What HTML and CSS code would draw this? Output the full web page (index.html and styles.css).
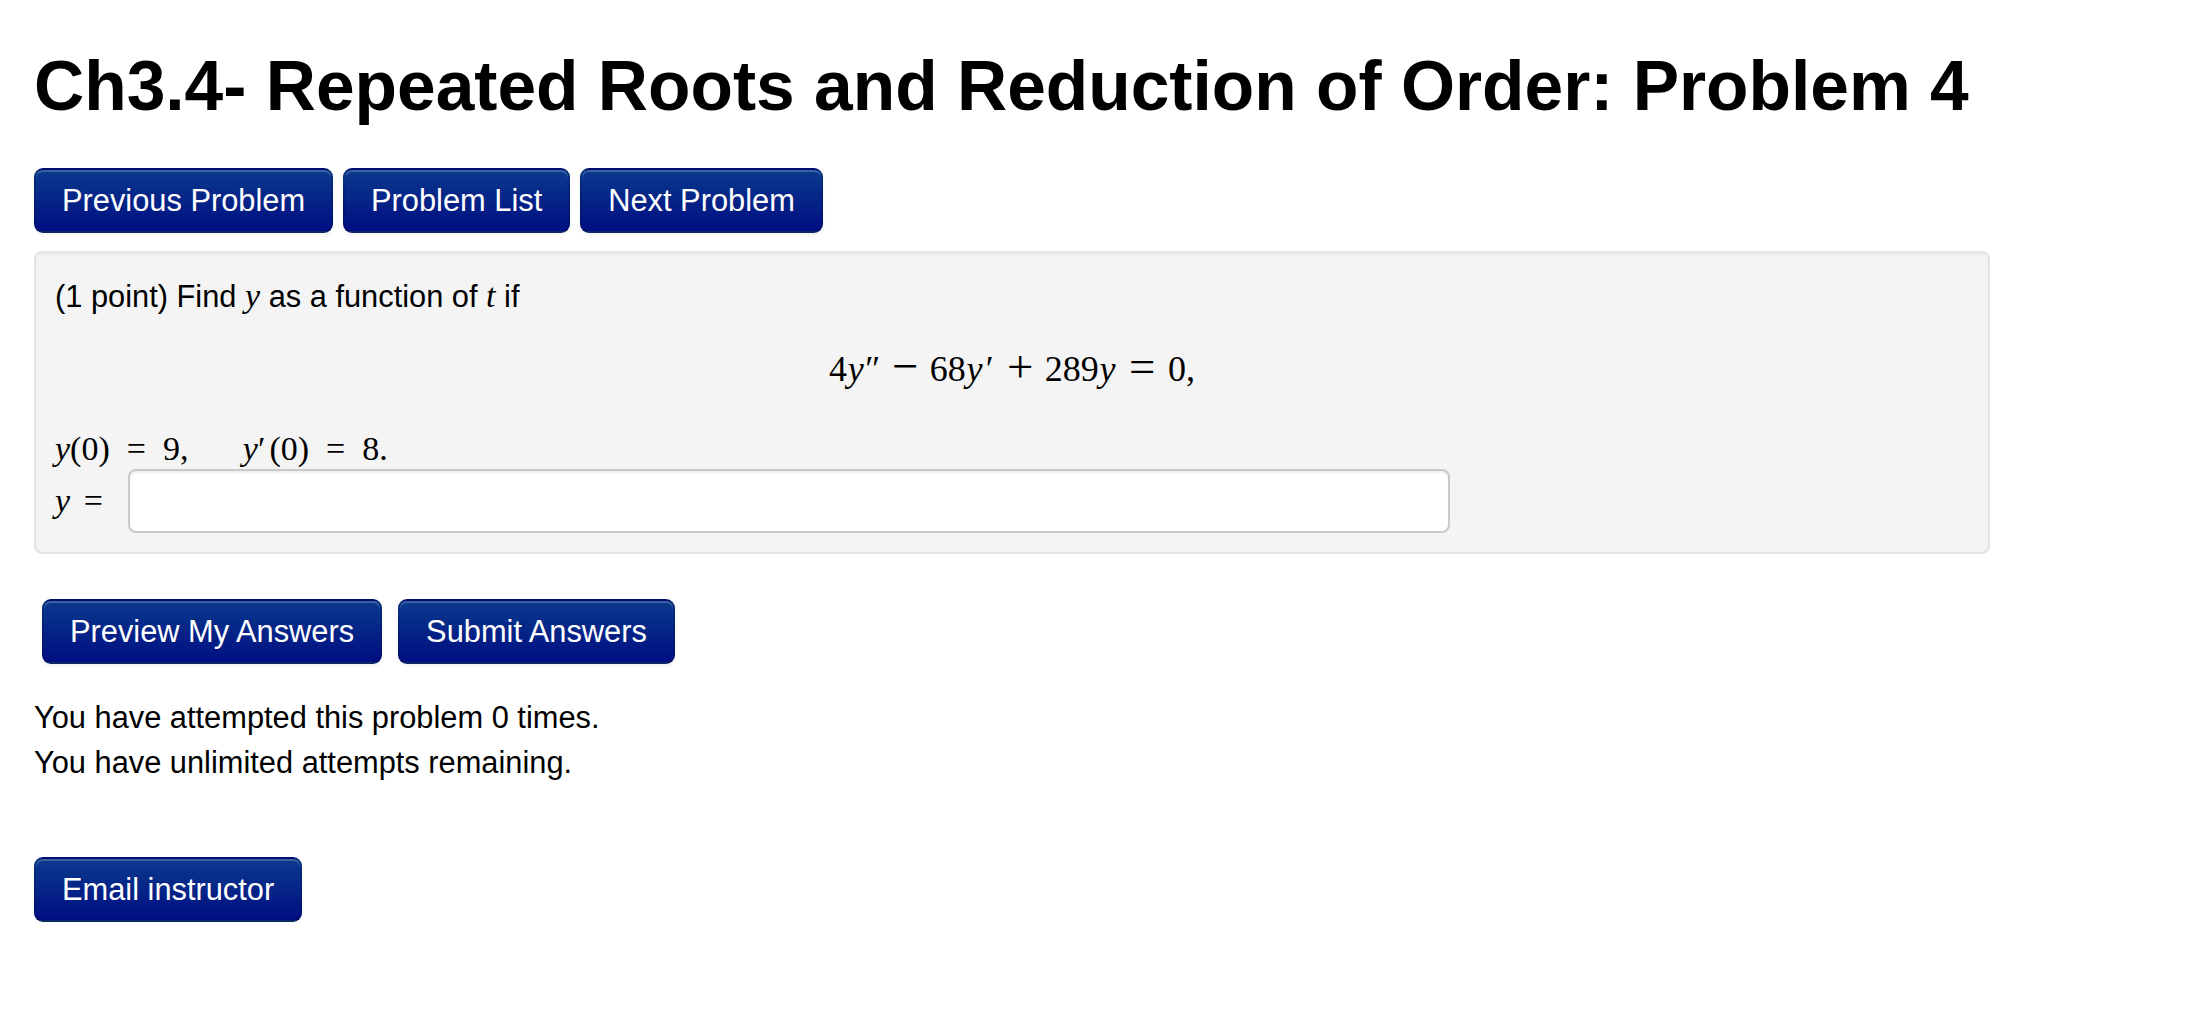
FILE: index.html
```html
<!DOCTYPE html>
<html lang="en">
<head>
<meta charset="utf-8">
<title>Ch3.4- Repeated Roots and Reduction of Order: Problem 4</title>
<link rel="stylesheet" href="styles.css">
</head>
<body>
<div class="page">
  <h1 class="title">Ch3.4- Repeated Roots and Reduction of Order: Problem 4</h1>

  <div class="nav">
    <a class="btn" href="#">Previous Problem</a>
    <a class="btn" href="#">Problem List</a>
    <a class="btn" href="#">Next Problem</a>
  </div>

  <div class="problem">
    <div class="intro">(1 point) Find <span class="math mi">y</span> as a function of <span class="math mi">t</span> if</div>
    <div class="display-eq math">
      <span class="mn">4</span><span class="mi">y</span><span class="prime2">″</span><span class="bin">−</span><span class="mn">68</span><span class="mi">y</span><span class="prime">′</span><span class="bin">+</span><span class="mn">289</span><span class="mi">y</span><span class="rel">=</span><span class="mn">0</span><span class="mp">,</span>
    </div>
    <div class="cond math">
      <span class="mi">y</span>(0)<span class="rel">=</span>9,<span class="qquad"></span><span class="mi">y</span>′<span class="thin"></span>(0)<span class="rel">=</span>8.
    </div>
    <div class="answer-row">
      <span class="ans-label math"><span class="mi">y</span><span class="rel">=</span></span>
      <input class="answer" type="text" aria-label="answer">
    </div>
  </div>

  <div class="submit-row">
    <a class="btn" href="#">Preview My Answers</a>
    <a class="btn" href="#">Submit Answers</a>
  </div>

  <div class="attempts">
    <p>You have attempted this problem 0 times.</p>
    <p>You have unlimited attempts remaining.</p>
  </div>

  <div class="email-row">
    <a class="btn" href="#">Email instructor</a>
  </div>
</div>
</body>
</html>
```

FILE: styles.css
```css
html, body {
  margin: 0;
  padding: 0;
  background: #ffffff;
}

body {
  font-family: "Liberation Sans", Arial, Helvetica, sans-serif;
  font-size: 30.8px;
  line-height: 44px;
  color: #000000;
}

.page {
  width: 1956px;
  padding-left: 34px;
}

.title {
  font-size: 69.5px;
  line-height: 80px;
  font-weight: bold;
  margin: 46px 0 0;
  color: #000000;
}

.nav {
  display: flex;
  gap: 10px;
  margin-top: 42px;
}

.btn {
  display: inline-block;
  padding: 8px 26px;
  font-size: 30.8px;
  line-height: 45px;
  color: #ffffff;
  text-decoration: none;
  border: 2px solid;
  border-color: rgba(0, 0, 0, 0.12) rgba(0, 0, 0, 0.12) rgba(0, 0, 0, 0.28);
  border-radius: 9px;
  background: linear-gradient(to bottom, #0a3a8d, #000e82);
  box-shadow: inset 0 2px 0 rgba(255, 255, 255, 0.2), 0 2px 4px rgba(0, 0, 0, 0.06);
}

.problem {
  margin-top: 18px;
  background: #f4f4f4;
  border: 2px solid #e4e4e4;
  border-radius: 8px;
  padding: 21px 19px 19px;
  box-shadow: inset 0 2px 2px rgba(0, 0, 0, 0.04);
}

.intro {
  line-height: 44px;
}

.math {
  font-family: "Liberation Serif", "Times New Roman", serif;
}

.intro .math {
  font-size: 34px;
}

.mi {
  font-style: italic;
}

.display-eq {
  text-align: center;
  font-size: 36px;
  line-height: 44px;
  margin-top: 28px;
}

.display-eq .mi {
  display: inline-block;
  width: 0.49em;
}

.display-eq .bin,
.display-eq .rel {
  font-size: 1.3em;
  line-height: 0;
  vertical-align: -0.02em;
}

.display-eq .bin {
  margin: 0 0.24em;
}

.display-eq .rel {
  margin: 0 0.27em;
}

.prime {
  display: inline-block;
  width: 0.35em;
}

.prime2 {
  display: inline-block;
  width: 0.45em;
}

.cond {
  font-size: 34px;
  line-height: 40px;
  margin-top: 38px;
}

.cond .rel {
  margin: 0 0.5em;
}

.qquad {
  display: inline-block;
  width: 1.6em;
}

.thin {
  display: inline-block;
  width: 0.12em;
}

.answer-row {
  display: flex;
  align-items: center;
}

.ans-label {
  font-size: 34px;
  line-height: 44px;
  margin-right: 12px;
}

.ans-label .rel {
  margin: 0 0.4em;
}

.answer {
  box-sizing: border-box;
  width: 1322px;
  height: 64px;
  margin: 0;
  padding: 8px 13px;
  border: 2px solid #c9c9c9;
  border-radius: 8px;
  background: #ffffff;
  font-family: "Liberation Sans", Arial, sans-serif;
  font-size: 30.8px;
  box-shadow: inset 0 2px 2px rgba(0, 0, 0, 0.07);
}

.submit-row {
  display: flex;
  gap: 16px;
  margin-top: 45px;
  padding-left: 8px;
}

.attempts {
  margin-top: 30.5px;
  line-height: 45px;
}

.attempts p {
  margin: 0;
}

.email-row {
  margin-top: 72.5px;
  display: flex;
}
```
